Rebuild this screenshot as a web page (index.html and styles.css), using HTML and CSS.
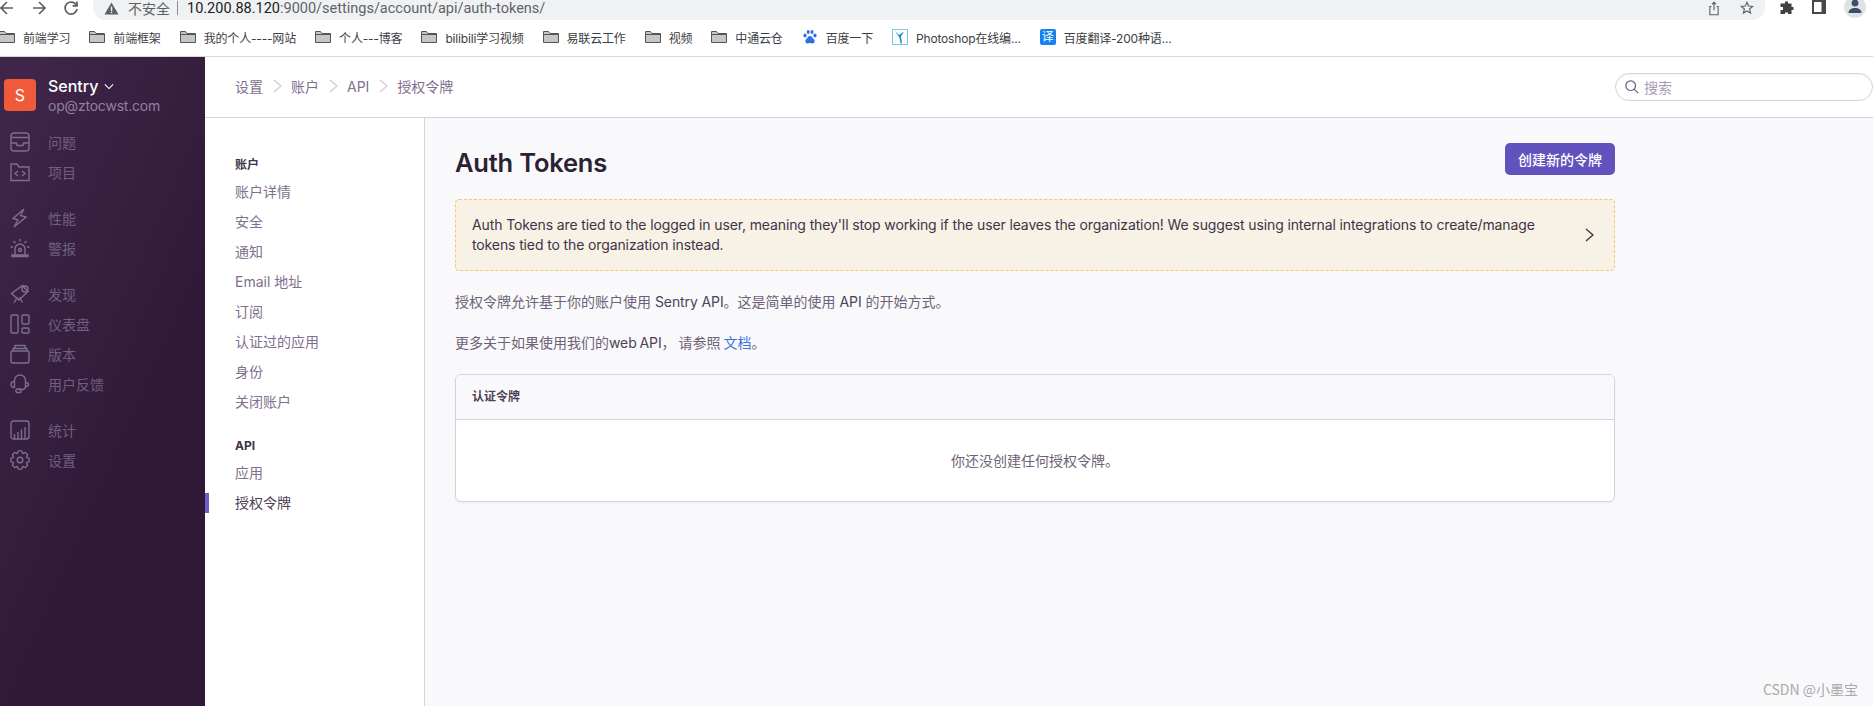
FILE: index.html
```html
<!DOCTYPE html>
<html lang="zh-CN">
<head>
<meta charset="UTF-8" />
<title>Auth Tokens</title>
<link rel="stylesheet" href="styles.css">
</head>
<body>

<!-- barra del browser -->
<div class="toolbar">
  <svg class="tool-btn back" viewBox="0 0 16 16"><path d="M14 8H2M8 2L2 8l6 6" /></svg>
  <svg class="tool-btn" viewBox="0 0 16 16"><path d="M2 8h12M8 2l6 6-6 6" /></svg>
  <svg class="tool-btn" viewBox="0 0 16 16"><path d="M13.5 5.5A6 6 0 1 0 14 9M14 1.5v4.4H9.6" /></svg>
  <div class="omnibox">
    <svg class="warn" viewBox="0 0 16 16"><path d="M8 1.500L15.500 14.500H.5z" /><rect class="warn-mark" x="7.200" y="6" width="1.600" height="4.500" /><rect class="warn-mark" x="7.200" y="11.300" width="1.600" height="1.600" /></svg>
    <span class="insecure">不安全</span>
    <span class="url-sep"></span>
    <span class="url"><b>10.200.88.120</b>:9000/settings/account/api/auth-tokens/</span>
    <svg class="omni-icon share" viewBox="0 0 14 18"><path d="M4 6.500H2v10h10v-10H10M7 11V1.500M4.500 4L7 1.500 9.500 4" /></svg>
    <svg class="omni-icon star" viewBox="0 0 16 16"><path d="M8 1.500l1.900 4.300 4.600.4-3.500 3 1.100 4.600L8 11.400l-4.100 2.400L5 9.200l-3.500-3 4.600-.4z" /></svg>
  </div>
  <svg class="ext-icon" viewBox="0 0 16 16"><path d="M6 1.500h3v2h3.500V7h2v3h-2v4H9v-1.500H6V14H1.500v-4H4V7H1.500V3.500H6z" /></svg>
  <svg class="side-icon" viewBox="0 0 14 14"><path d="M0 0h14v14H0zM9.500 2H2v10h7.500z" fill-rule="evenodd" /></svg>
  <div class="avatar"><svg viewBox="0 0 22 22"><circle cx="11" cy="7" r="3.400" /><path d="M4.500 17c0-3.500 3-5 6.500-5s6.500 1.500 6.500 5z" /></svg></div>
</div>

<div class="bookmarks">
  <a class="bm"><svg class="folder" viewBox="0 0 16 14"><path d="M.5 12.500v-11h5l1.500 2h8.500v9z" /><path class="folder-line" d="M.5 4.500h15" /></svg>前端学习</a>
  <a class="bm"><svg class="folder" viewBox="0 0 16 14"><path d="M.5 12.500v-11h5l1.500 2h8.500v9z" /><path class="folder-line" d="M.5 4.500h15" /></svg>前端框架</a>
  <a class="bm"><svg class="folder" viewBox="0 0 16 14"><path d="M.5 12.500v-11h5l1.500 2h8.500v9z" /><path class="folder-line" d="M.5 4.500h15" /></svg>我的个人----网站</a>
  <a class="bm"><svg class="folder" viewBox="0 0 16 14"><path d="M.5 12.500v-11h5l1.500 2h8.500v9z" /><path class="folder-line" d="M.5 4.500h15" /></svg>个人---博客</a>
  <a class="bm"><svg class="folder" viewBox="0 0 16 14"><path d="M.5 12.500v-11h5l1.500 2h8.500v9z" /><path class="folder-line" d="M.5 4.500h15" /></svg>bilibili学习视频</a>
  <a class="bm"><svg class="folder" viewBox="0 0 16 14"><path d="M.5 12.500v-11h5l1.500 2h8.500v9z" /><path class="folder-line" d="M.5 4.500h15" /></svg>易联云工作</a>
  <a class="bm"><svg class="folder" viewBox="0 0 16 14"><path d="M.5 12.500v-11h5l1.500 2h8.500v9z" /><path class="folder-line" d="M.5 4.500h15" /></svg>视频</a>
  <a class="bm"><svg class="folder" viewBox="0 0 16 14"><path d="M.5 12.500v-11h5l1.500 2h8.500v9z" /><path class="folder-line" d="M.5 4.500h15" /></svg>中通云仓</a>
  <a class="bm"><svg class="favicon" viewBox="0 0 16 16"><g class="paw"><ellipse cx="3" cy="6.500" rx="1.600" ry="2" /><ellipse cx="6.200" cy="3" rx="1.500" ry="2" /><ellipse cx="10" cy="3" rx="1.500" ry="2" /><ellipse cx="13" cy="6.500" rx="1.600" ry="2" /><path d="M8 7c2 0 2.500 2 4 3.500s.5 4-2 4c-1 0-1.300-.4-2-.4s-1 .4-2 .4c-2.500 0-3.500-2.500-2-4S6 7 8 7z" /></g></svg>百度一下</a>
  <a class="bm"><svg class="favicon" viewBox="0 0 16 16"><rect class="ps-box" x=".5" y=".5" width="15" height="15" /><path class="ps-man" d="M3 2l4 4 5-3.500-3 5 1 7H8.500L7.500 9 6 6.500z" /></svg>Photoshop在线编...</a>
  <a class="bm"><span class="fanyi">译</span>百度翻译-200种语...</a>
</div>

<div class="app">
  <aside class="sidebar">
    <div class="org">
      <div class="org-logo">S</div>
      <div class="org-info">
        <div class="org-name">Sentry <svg class="org-caret" viewBox="0 0 12 8"><path d="M1 1.500l5 5 5-5" /></svg></div>
        <div class="org-mail">op@ztocwst.com</div>
      </div>
    </div>

    <nav class="side-nav">
      <div class="side-group">
        <a class="side-item">
          <svg class="side-svg" viewBox="0 0 20 20"><rect x="1" y="1" width="18" height="18" rx="3" /><path d="M1 5.500h18M1 11h5.500v1.500a1 1 0 0 0 1 1h5a1 1 0 0 0 1-1V11H19" /></svg>
          问题
        </a>
        <a class="side-item">
          <svg class="side-svg" viewBox="0 0 20 20"><path d="M1 18V2h6l2 3h10v13.500H1z" /><path d="M8 9l-3 2.500L8 14M12 9l3 2.500L12 14" /></svg>
          项目
        </a>
      </div>
      <div class="side-group">
        <a class="side-item">
          <svg class="side-svg" viewBox="0 0 20 20"><path d="M14 1L3 10.500l5 1.500-4 7 12-10-5.500-1.500z" /></svg>
          性能
        </a>
        <a class="side-item">
          <svg class="side-svg" viewBox="0 0 20 20"><path d="M5 17V11a5 5 0 0 1 10 0v6M2 18.500h16v-1.500H2z" /><circle cx="10" cy="12" r="1.500" /><path d="M10 1v2.500M3.500 3l2 2M16.500 3l-2 2M.5 9H3M17 9h2.500" /></svg>
          警报
        </a>
      </div>
      <div class="side-group">
        <a class="side-item">
          <svg class="side-svg" viewBox="0 0 20 20"><path d="M1.500 9.500l11-8 5.500 6-9 8.500zM12.500 1.500l5.500 6.500M7.500 13L4 19M9.500 13l3 5.500" /><circle cx="15" cy="5" r="3" /></svg>
          发现
        </a>
        <a class="side-item">
          <svg class="side-svg" viewBox="0 0 20 20"><rect x="1" y="1" width="7" height="18" rx="1" /><rect x="12" y="1" width="7" height="9" rx="1" /><rect x="12" y="14" width="7" height="5" rx="1" /></svg>
          仪表盘
        </a>
        <a class="side-item">
          <svg class="side-svg" viewBox="0 0 20 20"><rect x="1" y="7" width="18" height="12" rx="1.500" /><path d="M3 7V4.500h14V7M5 4.500V1.500h10v3" /></svg>
          版本
        </a>
        <a class="side-item">
          <svg class="side-svg" viewBox="0 0 20 20"><path d="M4.500 14V6.500a5.500 5.500 0 0 1 11 0V12a3 3 0 0 1-3 3.500H9" /><path d="M4.500 7.500C2 7.500 1 9 1 10.500s1 3 3.500 3M15.500 8.500c2 0 3 .8 3 2s-1 2-3 2" /><rect x="6" y="15" width="5" height="3.500" rx="1" /></svg>
          用户反馈
        </a>
      </div>
      <div class="side-group">
        <a class="side-item">
          <svg class="side-svg" viewBox="0 0 20 20"><rect x="1" y="1" width="18" height="18" rx="2.500" /><path d="M4.500 19v-5M8 19v-7M11.500 19V9.500M15 19V7" /></svg>
          统计
        </a>
        <a class="side-item">
          <svg class="side-svg" viewBox="0 0 20 20"><path d="M8.390.84h3.220l1.070 2.690 2.650-1.150 2.280 2.280-1.150 2.650 2.690 1.080v3.220l-2.690 1.070 1.150 2.650-2.280 2.280-2.650-1.150-1.070 2.690H8.390l-1.070-2.690-2.650 1.150-2.280-2.280 1.150-2.650L.84 11.610V8.390l2.690-1.070-1.150-2.650 2.280-2.280 2.650 1.150z" stroke-linejoin="round" /><circle cx="10" cy="10" r="2.800" /></svg>
          设置
        </a>
      </div>
    </nav>
  </aside>

  <div class="main">
    <header class="topbar">
      <div class="crumbs">
        <span>设置</span>
        <svg class="crumb-sep" viewBox="0 0 9 14"><path d="M1 1l7 6-7 6" /></svg>
        <span>账户</span>
        <svg class="crumb-sep" viewBox="0 0 9 14"><path d="M1 1l7 6-7 6" /></svg>
        <span>API</span>
        <svg class="crumb-sep" viewBox="0 0 9 14"><path d="M1 1l7 6-7 6" /></svg>
        <span>授权令牌</span>
      </div>
      <div class="search">
        <svg class="search-icon" viewBox="0 0 16 16"><circle cx="6.500" cy="6.500" r="5.500" /><path d="M10.500 10.500L15 15" /></svg>
        <span class="search-text">搜索</span>
      </div>
    </header>

    <div class="body-wrap">
      <nav class="settings-nav">
        <div class="nav-title">账户</div>
        <a class="nav-link">账户详情</a>
        <a class="nav-link">安全</a>
        <a class="nav-link">通知</a>
        <a class="nav-link">Email 地址</a>
        <a class="nav-link">订阅</a>
        <a class="nav-link">认证过的应用</a>
        <a class="nav-link">身份</a>
        <a class="nav-link">关闭账户</a>
        <div class="nav-title second">API</div>
        <a class="nav-link">应用</a>
        <a class="nav-link active">授权令牌</a>
      </nav>

      <main class="content">
        <div class="page-head">
          <h1>Auth Tokens</h1>
          <button class="btn-primary">创建新的令牌</button>
        </div>

        <div class="alert">
          <p>Auth Tokens are tied to the logged in user, meaning they'll stop working if the user leaves the organization! We suggest using internal integrations to create/manage tokens tied to the organization instead.</p>
          <svg class="alert-arrow" viewBox="0 0 9 14"><path d="M1 1l7 6-7 6" /></svg>
        </div>

        <p class="text">授权令牌允许基于你的账户使用 <span class="latin">Sentry API</span>。这是简单的使用 <span class="latin">API</span> 的开始方式。</p>
        <p class="text tight">更多关于如果使用我们的<span class="latin">web API</span>， 请参照 <a class="doc-link">文档</a>。</p>

        <section class="panel">
          <div class="panel-head">认证令牌</div>
          <div class="panel-empty">你还没创建任何授权令牌。</div>
        </section>
      </main>
    </div>
  </div>
</div>

<div class="watermark">CSDN @小墨宝</div>

</body>
</html>
```

FILE: styles.css
```css
* {
  box-sizing: border-box;
}

html, body {
  height: 100%;
}

body {
  margin: 0;
  height: 706px;
  overflow: hidden;
  display: flex;
  flex-direction: column;
  position: relative;
  background: #fff;
  font-family: Inter, "Noto Sans CJK SC", sans-serif;
  font-size: 14px;
  color: #4d4158;
}

/* barra del browser */
.toolbar {
  height: 20px;
  flex-shrink: 0;
  display: flex;
  align-items: flex-start;
  background: #fff;
}

.tool-btn {
  width: 16px;
  height: 16px;
  flex-shrink: 0;
  margin-right: 16px;
  fill: none;
  stroke: #5c5f63;
  stroke-width: 1.7;
}

.tool-btn.back {
  margin-left: -1px;
}

.omnibox {
  width: 1672px;
  height: 20px;
  margin-left: -2px;
  flex-shrink: 0;
  display: flex;
  align-items: center;
  padding: 0 0 4px 11px;
  background: #eff1f3;
  border-radius: 0 0 13px 13px;
  font-family: Roboto, "Noto Sans CJK SC", sans-serif;
}

.warn {
  width: 15px;
  height: 15px;
  fill: #5c5f63;
}

.warn-mark {
  fill: #eff1f3;
}

.insecure {
  margin-left: 9px;
  font-size: 14px;
  color: #5c5f63;
}

.url-sep {
  width: 1px;
  height: 14px;
  margin: 0 9px 0 7px;
  background: #8a8d91;
}

.url {
  font-size: 14.500px;
  color: #5f6368;
}

.url b {
  font-weight: 400;
  color: #202124;
}

.omni-icon {
  flex-shrink: 0;
  fill: none;
  stroke: #5c5f63;
  stroke-width: 1.300;
}

.omni-icon.share {
  width: 12px;
  height: 15px;
  margin-left: auto;
}

.omni-icon.star {
  width: 14px;
  height: 14px;
  margin: 0 11px 0 20px;
}

.ext-icon {
  width: 16px;
  height: 16px;
  margin-left: 14px;
  fill: #3f4245;
}

.side-icon {
  width: 14px;
  height: 14px;
  margin-left: 17px;
  fill: #45484b;
}

.avatar {
  width: 22px;
  height: 22px;
  margin: -4px 0 0 18px;
  border-radius: 50%;
  background: #dfe1e5;
  overflow: hidden;
  fill: #3d4f68;
}

.bookmarks {
  height: 37px;
  flex-shrink: 0;
  display: flex;
  align-items: center;
  gap: 19px;
  padding-bottom: 2px;
  margin-left: -1px;
  border-bottom: 1px solid #d9d9dc;
}

.bm {
  display: flex;
  align-items: center;
  gap: 8px;
  font-size: 12px;
  letter-spacing: -0.17px;
  color: #3c4043;
  white-space: nowrap;
}

.folder {
  width: 16px;
  height: 14px;
  fill: #c6c6c6;
  stroke: #555;
}

.folder-line {
  fill: none;
}

.favicon {
  width: 16px;
  height: 16px;
}

.paw {
  fill: #2f6fe0;
}

.ps-box {
  fill: #fff;
  stroke: #7cc8e8;
}

.ps-man {
  fill: #1c8fd0;
}

.fanyi {
  width: 16px;
  height: 16px;
  border-radius: 2px;
  background: #1482f0;
  color: #fff;
  font-size: 12px;
  line-height: 16px;
  text-align: center;
}

/* app */
.app {
  flex: 1;
  display: flex;
  min-height: 0;
}

.sidebar {
  width: 205px;
  flex-shrink: 0;
  padding: 22px 0 0 4px;
  background: linear-gradient(294deg, #2f1937 35%, #3f2549 92%);
}

.org {
  display: flex;
  gap: 12px;
}

.org-logo {
  width: 32px;
  height: 32px;
  border-radius: 4px;
  background: #f05a3a;
  color: #fff;
  font-size: 16px;
  line-height: 32px;
  text-align: center;
}

.org-info {
  margin-top: -1px;
}

.org-name {
  display: flex;
  align-items: center;
  gap: 6px;
  height: 16px;
  font-size: 16px;
  font-weight: 500;
  color: #fff;
}

.org-caret {
  width: 10px;
  height: 7px;
  fill: none;
  stroke: #fff;
  stroke-width: 1.300;
}

.org-mail {
  margin-top: 2px;
  font-size: 14px;
  line-height: 20px;
  letter-spacing: -0.2px;
  color: #8f80a0;
}

.side-nav {
  margin-top: 11px;
  padding-left: 6px;
}

.side-group {
  margin-bottom: 16px;
}

.side-item {
  display: flex;
  align-items: center;
  gap: 18px;
  height: 30px;
  color: #6f5f80;
}

.side-svg {
  width: 20px;
  height: 20px;
  flex-shrink: 0;
  fill: none;
  stroke: #7d6d8e;
  stroke-width: 1.400;
}

.main {
  flex: 1;
  min-width: 0;
  display: flex;
  flex-direction: column;
}

.topbar {
  height: 61px;
  flex-shrink: 0;
  display: flex;
  align-items: center;
  justify-content: space-between;
  padding-left: 30px;
  border-bottom: 1px solid #d5d1de;
}

.crumbs {
  display: flex;
  align-items: center;
  gap: 9.500px;
  margin-bottom: 2px;
  color: #80708f;
}

.crumb-sep {
  width: 9px;
  height: 14px;
  fill: none;
  stroke: #cfcad8;
  stroke-width: 1.200;
}

.search {
  width: 258px;
  height: 28px;
  display: flex;
  align-items: center;
  gap: 5px;
  padding-left: 9px;
  border: 1px solid #d5d1de;
  border-radius: 14px;
  box-shadow: inset 0 1px 2px rgba(43, 34, 51, 0.06);
}

.search-icon {
  width: 14px;
  height: 14px;
  fill: none;
  stroke: #6f5e86;
  stroke-width: 1.400;
}

.search-text {
  color: #a79cb4;
}

.body-wrap {
  flex: 1;
  min-height: 0;
  display: flex;
}

.settings-nav {
  width: 220px;
  flex-shrink: 0;
  padding-top: 39px;
  background: #fff;
  border-right: 1px solid #d5d1de;
}

.nav-title {
  height: 16px;
  padding-left: 30px;
  margin-bottom: 9px;
  font-size: 12px;
  line-height: 16px;
  font-weight: 700;
  color: #3e3446;
}

.nav-title.second {
  margin-top: 26px;
}

.nav-link {
  display: block;
  height: 20px;
  line-height: 20px;
  margin-bottom: 10px;
  padding-left: 30px;
  color: #80708f;
}

.nav-link.active {
  padding-left: 26px;
  border-left: 4px solid #6c5fc7;
  border-radius: 0 2px 2px 0;
  color: #4d4158;
}

.content {
  flex: 1;
  min-width: 0;
  padding: 25px 0 0 30px;
  background: #f9f9fb;
}

.page-head {
  width: 1160px;
  display: flex;
  justify-content: space-between;
  align-items: flex-start;
}

h1 {
  margin: 0;
  font-size: 25.500px;
  line-height: 40px;
  letter-spacing: -0.2px;
  font-weight: 600;
  color: #2b2233;
}

.btn-primary {
  width: 110px;
  height: 32px;
  padding: 0;
  border: 0;
  border-radius: 5px;
  background: #6152bd;
  color: #fff;
  font-family: inherit;
  font-size: 14px;
  font-weight: 500;
}

.alert {
  width: 1160px;
  height: 72px;
  margin-top: 16px;
  display: flex;
  align-items: center;
  justify-content: space-between;
  padding: 0 20px 0 16px;
  background: #f7f1e6;
  border: 1px dashed #f5c76f;
  border-radius: 4px;
  color: #3e3446;
}

.alert p {
  width: 1090px;
  margin: 0;
  line-height: 20px;
  letter-spacing: -0.12px;
}

.alert-arrow {
  width: 9px;
  height: 14px;
  fill: none;
  stroke: #3e3446;
  stroke-width: 1.300;
}

.text {
  margin: 21px 0 0;
  line-height: 20px;
  color: #6e6278;
}

.text.tight {
  word-spacing: -1px;
}

.latin {
  letter-spacing: -0.1px;
  color: #4d4158;
}

.doc-link {
  color: #3d74db;
}

.panel {
  width: 1160px;
  margin-top: 21px;
  background: #fff;
  border: 1px solid #d5d1de;
  border-radius: 6px;
  overflow: hidden;
  box-shadow: 0 1px 2px rgba(43, 34, 51, 0.05);
}

.panel-head {
  height: 45px;
  padding-left: 16px;
  line-height: 44px;
  font-size: 12px;
  font-weight: 700;
  color: #4d4158;
  background: #f9f9fb;
  border-bottom: 1px solid #d5d1de;
}

.panel-empty {
  height: 81px;
  line-height: 81px;
  text-align: center;
  color: #6e6278;
}

.watermark {
  position: absolute;
  right: 15px;
  bottom: 7px;
  font-family: "Noto Sans CJK SC", sans-serif;
  font-size: 14px;
  color: #a9a9ab;
}
```
